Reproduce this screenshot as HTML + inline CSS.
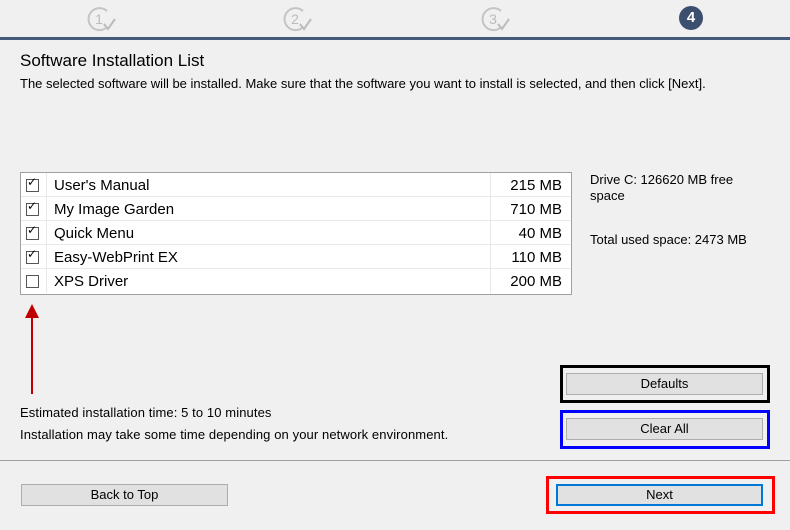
<!DOCTYPE html>
<html><head><style>
body{margin:0;width:790px;height:530px;background:#f0f0f0;font-family:"Liberation Sans",sans-serif;color:#000;position:relative;overflow:hidden}
.a{position:absolute}
.step{position:absolute;top:6px;width:24px;height:24px;border-radius:50%;font-size:15px;text-align:center;line-height:24px}
.btn{position:absolute;background:#e1e1e1;border:1px solid #adadad;box-sizing:border-box;font-size:13px;text-align:center}
.row{position:absolute;left:21px;width:549px;height:23px;border-bottom:1px solid #e8e8e8;background:#fff;font-size:15px}
.cb{position:absolute;left:5px;top:6px;width:11px;height:11px;border:1px solid #555;background:#fff}
.nm{position:absolute;left:33px;top:4px}
.sz{position:absolute;right:8px;top:4px}
</style></head><body>
<svg class="a" style="left:87px;top:5px" width="34" height="28"><path d="M20 6 A11 11 0 1 0 19 23" fill="none" stroke="#c4c4c4" stroke-width="2"/><text x="12" y="19" text-anchor="middle" font-family="Liberation Sans" font-size="14" fill="#bbb">1</text><path d="M17 19 L21 24 L28 14" fill="none" stroke="#bbb" stroke-width="2"/></svg>
<svg class="a" style="left:283px;top:5px" width="34" height="28"><path d="M20 6 A11 11 0 1 0 19 23" fill="none" stroke="#c4c4c4" stroke-width="2"/><text x="12" y="19" text-anchor="middle" font-family="Liberation Sans" font-size="14" fill="#bbb">2</text><path d="M17 19 L21 24 L28 14" fill="none" stroke="#bbb" stroke-width="2"/></svg>
<svg class="a" style="left:481px;top:5px" width="34" height="28"><path d="M20 6 A11 11 0 1 0 19 23" fill="none" stroke="#c4c4c4" stroke-width="2"/><text x="12" y="19" text-anchor="middle" font-family="Liberation Sans" font-size="14" fill="#bbb">3</text><path d="M17 19 L21 24 L28 14" fill="none" stroke="#bbb" stroke-width="2"/></svg>
<div class="step" style="left:679px;background:#3d4f6f;color:#fff;font-weight:bold">4</div>
<div class="a" style="left:0;top:37px;width:790px;height:3px;background:#465a7a"></div>
<div class="a" style="left:20px;top:51px;font-size:17px">Software Installation List</div>
<div class="a" style="left:20px;top:76px;font-size:13px">The selected software will be installed. Make sure that the software you want to install is selected, and then click [Next].</div>
<div class="a" style="left:20px;top:172px;width:550px;height:121px;border:1px solid #a0a0a0;background:#fff"></div>
<div class="row" style="top:173px"><div class="cb"></div><span class="a" style="left:6px;top:2px;font-size:12px">✓</span><span class="nm">User's Manual</span><span class="sz">215 MB</span></div>
<div class="row" style="top:197px"><div class="cb"></div><span class="a" style="left:6px;top:2px;font-size:12px">✓</span><span class="nm">My Image Garden</span><span class="sz">710 MB</span></div>
<div class="row" style="top:221px"><div class="cb"></div><span class="a" style="left:6px;top:2px;font-size:12px">✓</span><span class="nm">Quick Menu</span><span class="sz">40 MB</span></div>
<div class="row" style="top:245px"><div class="cb"></div><span class="a" style="left:6px;top:2px;font-size:12px">✓</span><span class="nm">Easy-WebPrint EX</span><span class="sz">110 MB</span></div>
<div class="row" style="top:269px;border-bottom:none"><div class="cb"></div><span class="nm">XPS Driver</span><span class="sz">200 MB</span></div>
<div class="a" style="left:46px;top:173px;width:1px;height:120px;background:#e8e8e8"></div>
<div class="a" style="left:490px;top:173px;width:1px;height:120px;background:#e8e8e8"></div>
<div class="a" style="left:590px;top:172px;font-size:13px;line-height:16px;width:160px">Drive C: 126620 MB free space</div>
<div class="a" style="left:590px;top:232px;font-size:13px">Total used space: 2473 MB</div>
<svg class="a" style="left:24px;top:304px" width="16" height="90"><polygon points="8,0 1,14 15,14" fill="#c00000"/><rect x="7" y="12" width="2" height="78" fill="#c00000"/></svg>
<div class="a" style="left:20px;top:405px;font-size:13px;letter-spacing:0.1px">Estimated installation time: 5 to 10 minutes</div>
<div class="a" style="left:20px;top:427px;font-size:13px;letter-spacing:0.1px">Installation may take some time depending on your network environment.</div>
<div class="a" style="left:560px;top:365px;width:210px;height:38px;border:3px solid #000;box-sizing:border-box"></div>
<div class="btn" style="left:566px;top:373px;width:197px;height:22px;line-height:20px">Defaults</div>
<div class="a" style="left:560px;top:410px;width:210px;height:39px;border:3px solid #0000ff;box-sizing:border-box"></div>
<div class="btn" style="left:566px;top:418px;width:197px;height:22px;line-height:20px">Clear All</div>
<div class="a" style="left:0;top:460px;width:790px;height:1px;background:#a0a0a0"></div>
<div class="btn" style="left:21px;top:484px;width:207px;height:22px;line-height:20px">Back to Top</div>
<div class="a" style="left:546px;top:476px;width:229px;height:38px;border:3px solid #ff0000;box-sizing:border-box"></div>
<div class="btn" style="left:556px;top:484px;width:207px;height:22px;line-height:18px;border:2px solid #0078d7">Next</div>
</body></html>
